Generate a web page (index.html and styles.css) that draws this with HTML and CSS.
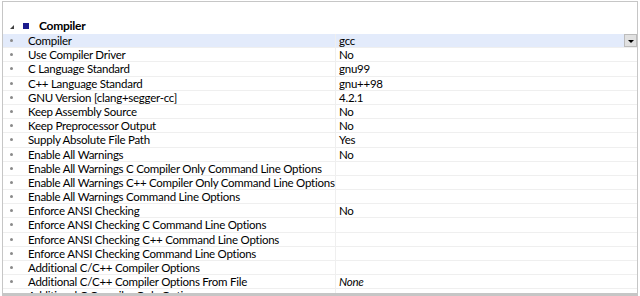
FILE: index.html
```html
<!DOCTYPE html>
<html lang="en">
<head>
    <meta charset="UTF-8">
    <title>Compiler Properties</title>
    <link rel="stylesheet" href="styles.css">
</head>
<body>
    <div class="props-panel">
        <div class="group-header">
            <span class="expander"></span>
            <span class="group-icon"></span>
            <span class="group-title">Compiler</span>
        </div>
        <div class="props-list">
            <div class="prop-row selected">
                <div class="prop-name">Compiler</div>
                <div class="prop-value">gcc<span class="drop-btn"></span></div>
            </div>
            <div class="prop-row">
                <div class="prop-name">Use Compiler Driver</div>
                <div class="prop-value">No</div>
            </div>
            <div class="prop-row">
                <div class="prop-name">C Language Standard</div>
                <div class="prop-value">gnu99</div>
            </div>
            <div class="prop-row">
                <div class="prop-name">C++ Language Standard</div>
                <div class="prop-value">gnu++98</div>
            </div>
            <div class="prop-row">
                <div class="prop-name">GNU Version [clang+segger-cc]</div>
                <div class="prop-value">4.2.1</div>
            </div>
            <div class="prop-row">
                <div class="prop-name">Keep Assembly Source</div>
                <div class="prop-value">No</div>
            </div>
            <div class="prop-row">
                <div class="prop-name">Keep Preprocessor Output</div>
                <div class="prop-value">No</div>
            </div>
            <div class="prop-row">
                <div class="prop-name">Supply Absolute File Path</div>
                <div class="prop-value">Yes</div>
            </div>
            <div class="prop-row">
                <div class="prop-name">Enable All Warnings</div>
                <div class="prop-value">No</div>
            </div>
            <div class="prop-row">
                <div class="prop-name">Enable All Warnings C Compiler Only Command Line Options</div>
                <div class="prop-value"></div>
            </div>
            <div class="prop-row">
                <div class="prop-name">Enable All Warnings C++ Compiler Only Command Line Options</div>
                <div class="prop-value"></div>
            </div>
            <div class="prop-row">
                <div class="prop-name">Enable All Warnings Command Line Options</div>
                <div class="prop-value"></div>
            </div>
            <div class="prop-row">
                <div class="prop-name">Enforce ANSI Checking</div>
                <div class="prop-value">No</div>
            </div>
            <div class="prop-row">
                <div class="prop-name">Enforce ANSI Checking C Command Line Options</div>
                <div class="prop-value"></div>
            </div>
            <div class="prop-row">
                <div class="prop-name">Enforce ANSI Checking C++ Command Line Options</div>
                <div class="prop-value"></div>
            </div>
            <div class="prop-row">
                <div class="prop-name">Enforce ANSI Checking Command Line Options</div>
                <div class="prop-value"></div>
            </div>
            <div class="prop-row">
                <div class="prop-name">Additional C/C++ Compiler Options</div>
                <div class="prop-value"></div>
            </div>
            <div class="prop-row">
                <div class="prop-name">Additional C/C++ Compiler Options From File</div>
                <div class="prop-value"><em>None</em></div>
            </div>
            <div class="prop-row">
                <div class="prop-name">Additional C Compiler Only Options</div>
                <div class="prop-value"></div>
            </div>
        </div>
    </div>
</body>
</html>
```

FILE: styles.css
```css
body {
    margin: 0;
    font-family: Lato, "Open Sans", sans-serif;
    font-size: 11.5px;
    letter-spacing: -0.25px;
    color: #000;
    background: #fff;
}
.props-panel {
    margin: 1px 2px 0 2px;
    height: 291px;
    border: 1px solid #c6c6c6;
    border-bottom: 3px solid #c6c6c6;
    overflow: hidden;
}
.group-header {
    display: flex;
    align-items: center;
    height: 32px;
    padding-top: 15px;
    box-sizing: border-box;
    padding-left: 7px;
}
.expander {
    width: 0;
    height: 0;
    border-left: 4px solid transparent;
    border-bottom: 4px solid #404040;
    margin-top: 2px;
    margin-right: 9px;
}
.group-icon {
    width: 6px;
    height: 6px;
    background: #1c1c8e;
    margin-right: 10px;
}
.group-title {
    font-size: 12px;
    font-weight: bold;
    line-height: 14px;
}
.prop-row {
    display: flex;
    height: 14.2px;
    line-height: 14px;
    border-bottom: 1px solid #efefef;
    box-sizing: border-box;
}
.prop-row.selected {
    background: #e3ebfb;
}
.prop-name {
    width: 333px;
    flex: none;
    padding-left: 25px;
    box-sizing: border-box;
    white-space: nowrap;
    position: relative;
    border-right: 1px solid #efefef;
}
.prop-name::before {
    content: "";
    position: absolute;
    left: 7px;
    top: 5px;
    width: 3px;
    height: 3px;
    border-radius: 50%;
    background: #8a8a8a;
}
.prop-value {
    flex: 1;
    padding-left: 3px;
    position: relative;
    white-space: nowrap;
}
.drop-btn {
    position: absolute;
    right: 0;
    top: 0;
    width: 13px;
    height: 13px;
    background: #e1e1e1;
    border: 1px solid #bcbcbc;
    box-sizing: border-box;
}
.drop-btn::after {
    content: "";
    position: absolute;
    left: 3px;
    top: 5px;
    width: 0;
    height: 0;
    border-left: 3px solid transparent;
    border-right: 3px solid transparent;
    border-top: 3px solid #000;
}
```
